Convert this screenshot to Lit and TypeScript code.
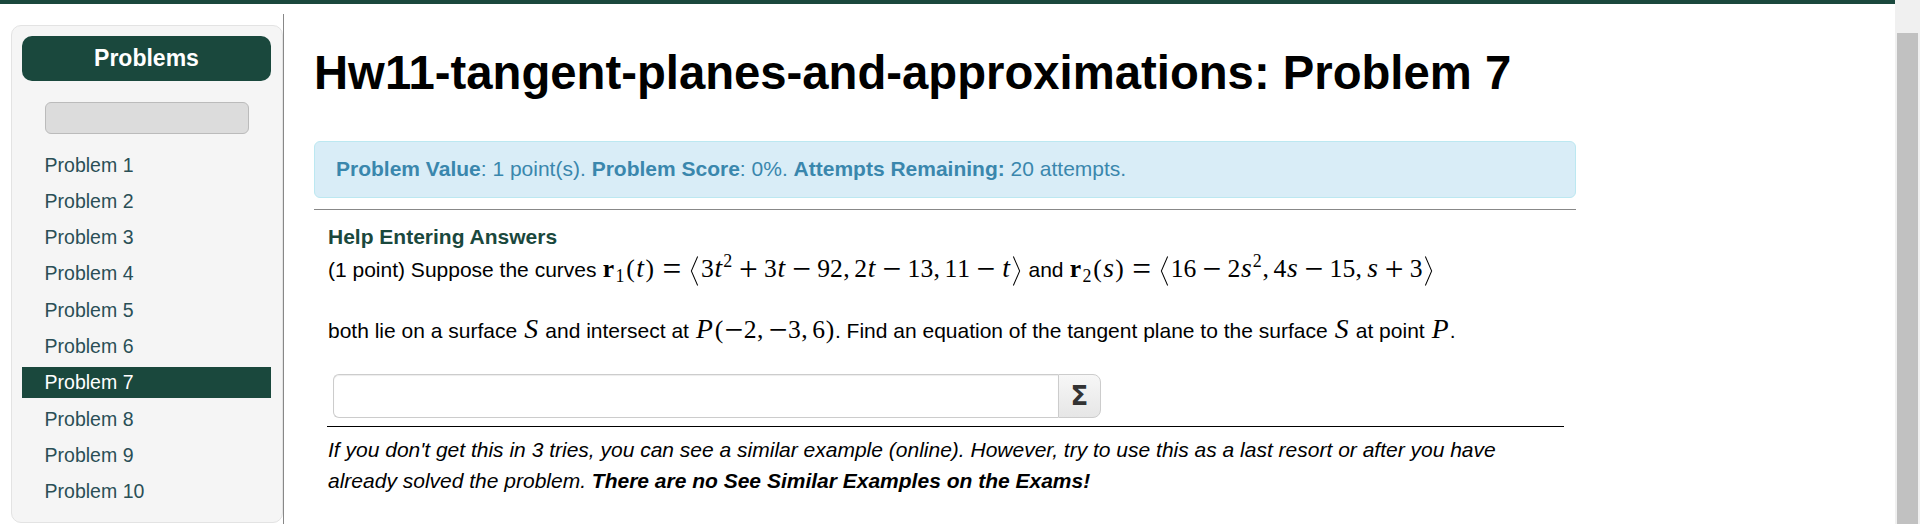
import { LitElement, html, css, TemplateResult } from "lit";
import { customElement } from "lit/decorators.js";

const W: Record<string, number> = { t: 0.361, s: 0.469, P: 0.751, S: 0.645 };

function angle(open: boolean): TemplateResult {
  return html`<svg class="angle" viewBox="0 0 10 32" preserveAspectRatio="none" aria-hidden="true"><polyline points=${open ? "8.5,0.5 1.5,16 8.5,31.5" : "1.5,0.5 8.5,16 1.5,31.5"} fill="none" stroke="#000" stroke-width="1.1"></polyline></svg>`;
}

function math(src: string): TemplateResult[] {
  const out: TemplateResult[] = [];
  for (let i = 0; i < src.length; i++) {
    const c = src[i];
    if (c === "<" || c === ">") out.push(angle(c === "<"));
    else if (c === "^") out.push(html`<span class="sup">${src[++i]}</span>`);
    else if (c === "_") out.push(html`<span class="sub">${src[++i]}</span>`);
    else if (c === "r") out.push(html`<span class="g bold" style="width:.474em">r</span>`);
    else if (c === "~") out.push(html`<span class="g neg">−</span>`);
    else if (c === "+" || c === "−") out.push(html`<span class="g bin">${c}</span>`);
    else if (c === "=") out.push(html`<span class="g rel">=</span>`);
    else if (c === ",") out.push(html`<span class="g comma">,</span>`);
    else if (/[0-9]/.test(c)) out.push(html`<span class="g" style="width:.5em">${c}</span>`);
    else if (c === "(" || c === ")") out.push(html`<span class="g" style="width:.389em">${c}</span>`);
    else out.push(html`<span class="g it" style="width:${W[c] / 1.08}em">${c}</span>`);
  }
  return out;
}

@customElement("app-root")
export class AppRoot extends LitElement {
  static styles = css`
    :host { display: block; height: 524px; overflow: hidden; font-family: "Liberation Sans", Arial, sans-serif; font-size: 21px; color: #000; background: #fff; }
    .page { display: flex; height: 524px; }
    .main { flex: 1; min-width: 0; display: flex; flex-direction: column; }
    .topbar { height: 4px; background: #1a483d; flex: none; }
    .body { display: flex; flex: 1; min-height: 0; }
    .scrollbar { width: 25px; flex: none; background: #f0f0f0; padding: 33px 2px 0; box-sizing: border-box; }
    .thumb { height: 100%; background: #c1c1c1; }
    .side { width: 284px; flex: none; box-sizing: border-box; margin-top: 10px; padding: 11px 0 0 11px; border-right: 1px solid #888; }
    .well { height: 498px; box-sizing: border-box; background: #f5f5f5; border: 1px solid #e3e3e3; border-radius: 10px; padding: 10px 11px 10px 10px; }
    .navhead { height: 45px; background: #1a483d; color: #fff; border-radius: 10px; font-weight: bold; font-size: 23px; line-height: 44px; text-align: center; }
    .search { height: 32px; margin: 21px 22px 0 23px; box-sizing: border-box; background: #dcdcdc; border: 1px solid #bbb; border-radius: 6px; }
    .nav { list-style: none; margin: 15.5px 0 0; padding: 0; }
    .nav li { height: 31px; line-height: 31px; padding-left: 22.6px; margin-bottom: 5.3px; color: #2a4f56; font-size: 19.5px; }
    .nav li.on { background: #1a483d; color: #fff; }
    .content { flex: 1; min-width: 0; padding-left: 30px; }
    .wrap { width: 1262px; }
    h1 { margin: 0; font-size: 47.25px; font-weight: bold; line-height: 56px; padding-top: 41px; color: #000; }
    .alert { margin-top: 40px; height: 57px; box-sizing: border-box; background: #d9edf7; border: 1px solid #bce8f1; border-radius: 6px; padding: 0 21px; line-height: 54px; color: #3a87ad; }
    .rule { height: 0; border-top: 1.2px solid #888; margin-top: 11px; }
    .problem { padding: 0 13px 0 14px; }
    .help { margin-top: 12px; line-height: 30px; font-weight: bold; color: #1a483d; }
    .line { line-height: 30px; white-space: nowrap; height: 30px; }
    .l1 { margin-top: 3px; }
    .l2 { margin-top: 31px; }
    .math { font-family: "Liberation Serif", serif; font-size: 25.6px; line-height: 0; }
    .g { display: inline-block; text-align: center; line-height: 0; }
    .it { font-style: italic; font-size: 1.08em; }
    .bold { font-weight: bold; }
    .neg { font-size: 1.3em; width: .6em; vertical-align: -.08em; }
    .bin { font-size: 1.3em; width: .6em; margin: 0 .17em; vertical-align: -.08em; }
    .rel { font-size: 1.3em; width: .6em; margin: 0 .214em; vertical-align: -.08em; }
    .comma { width: .278em; margin-right: .167em; }
    .sup { font-size: .7em; display: inline-block; width: .55em; text-align: center; vertical-align: .55em; line-height: 0; }
    .sub { font-size: .7em; display: inline-block; width: .62em; text-align: center; vertical-align: -.3em; line-height: 0; }
    .angle { width: 9px; height: 30px; vertical-align: -1px; margin: -8px 1.5px; }
    .answer { display: flex; margin: 28px 0 0 5px; height: 44px; width: 768px; }
    .input { flex: 1; box-sizing: border-box; border: 1px solid #ccc; border-right: 0; border-radius: 6px 0 0 6px; background: #fff; box-shadow: inset 0 1px 1px rgba(0,0,0,.075); padding: 0; outline: none; }
    .sigma { width: 43px; box-sizing: border-box; border: 1px solid #ccc; border-radius: 0 8px 8px 0; background: linear-gradient(#f7f7f7, #e6e6e6); display: flex; align-items: center; justify-content: center; font-size: 26px; font-weight: bold; color: #333; padding: 0; font-family: "DejaVu Sans", sans-serif; }
    .rule2 { height: 0; border-top: 1.2px solid #000; margin: 8px -1px 0 -1px; }
    .note { font-style: italic; margin: 6.5px 0 0; line-height: 31px; }
  `;

  render() {
    const items = Array.from({ length: 10 }, (_, i) => i + 1);
    return html`
      <div class="page">
        <div class="main">
          <div class="topbar"></div>
          <div class="body">
            <aside class="side">
              <div class="well">
                <div class="navhead">Problems</div>
                <div class="search"></div>
                <ul class="nav">
                  ${items.map((n) => html`<li class=${n === 7 ? "on" : ""}>Problem ${n}</li>`)}
                </ul>
              </div>
            </aside>
            <main class="content">
              <div class="wrap">
                <h1>Hw11-tangent-planes-and-approximations: Problem 7</h1>
                <div class="alert"><b>Problem Value</b>: 1 point(s). <b>Problem Score</b>: 0%. <b>Attempts Remaining:</b> 20 attempts.</div>
                <div class="rule"></div>
                <div class="problem">
                  <div class="help">Help Entering Answers</div>
                  <div class="line l1">(1 point) Suppose the curves <span class="math">${math("r_1(t)=<3t^2+3t−92,2t−13,11−t>")}</span> and <span class="math">${math("r_2(s)=<16−2s^2,4s−15,s+3>")}</span></div>
                  <div class="line l2">both lie on a surface <span class="math">${math("S")}</span> and intersect at <span class="math">${math("P(~2,~3,6)")}</span>. Find an equation of the tangent plane to the surface <span class="math">${math("S")}</span> at point <span class="math">${math("P")}</span>.</div>
                  <div class="answer"><input class="input" /><button class="sigma">Σ</button></div>
                  <div class="rule2"></div>
                  <p class="note">If you don't get this in 3 tries, you can see a similar example (online). However, try to use this as a last resort or after you have<br />already solved the problem. <b>There are no See Similar Examples on the Exams!</b></p>
                </div>
              </div>
            </main>
          </div>
        </div>
        <div class="scrollbar"><div class="thumb"></div></div>
      </div>
    `;
  }
}
